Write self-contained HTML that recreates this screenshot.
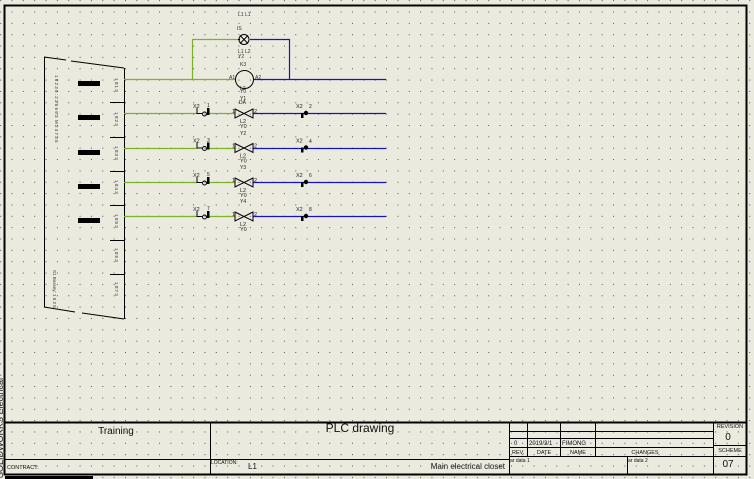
<!DOCTYPE html>
<html><head><meta charset="utf-8"><style>
html,body{margin:0;padding:0;background:#ebeadf;width:754px;height:479px;overflow:hidden}
svg{display:block}
text{font-family:"Liberation Sans",sans-serif}
</style></head><body>
<svg width="754" height="479" viewBox="0 0 754 479" xmlns="http://www.w3.org/2000/svg">
<defs>
<pattern id="d" x="11.5" y="11.5" width="11.35" height="11.35" patternUnits="userSpaceOnUse">
<rect x="0" y="0" width="1" height="1" fill="#555"/>
</pattern>
</defs>
<rect width="754" height="479" fill="#ebeadf"/>
<rect width="754" height="479" fill="url(#d)"/>
<!-- frame -->
<rect x="4.5" y="5.5" width="742" height="469" fill="none" stroke="#000" stroke-width="2"/>
<rect x="5" y="476" width="88" height="3" fill="#000"/>
<text transform="translate(3,478) rotate(-90)" font-size="9" fill="#222">SOLIDWORKS Electrical</text>

<!-- title block -->
<g stroke="#000" fill="none" stroke-width="1">
<line x1="4" y1="422.5" x2="747" y2="422.5" stroke-width="2"/>
<line x1="210.5" y1="422" x2="210.5" y2="474"/>
<line x1="509.5" y1="422" x2="509.5" y2="474"/>
<line x1="4" y1="459.5" x2="509" y2="459.5"/>
<line x1="713.5" y1="422" x2="713.5" y2="474"/>
<line x1="509" y1="431.5" x2="713" y2="431.5"/>
<line x1="509" y1="438.5" x2="713" y2="438.5"/>
<line x1="509" y1="447.5" x2="713" y2="447.5"/>
<line x1="509" y1="456.5" x2="747" y2="456.5"/>
<line x1="713" y1="445.5" x2="747" y2="445.5"/>
<line x1="527.5" y1="422" x2="527.5" y2="456"/>
<line x1="560.5" y1="422" x2="560.5" y2="456"/>
<line x1="595.5" y1="422" x2="595.5" y2="456"/>
<line x1="627.5" y1="456" x2="627.5" y2="474"/>
</g>
<g fill="#111">
<text x="116" y="434" font-size="10" text-anchor="middle">Training</text>
<text x="360" y="432" font-size="12" text-anchor="middle">PLC drawing</text>
<text x="7" y="469" font-size="5.5">CONTRACT:</text>
<text x="211" y="464" font-size="5">LOCATION:</text>
<text x="248" y="469" font-size="8">L1</text>
<text x="505" y="469" font-size="8" text-anchor="end">Main electrical closet</text>
<text x="514" y="445" font-size="6">0</text>
<text x="529" y="445" font-size="6">2019/3/1</text>
<text x="562" y="445" font-size="6">FIMONG</text>
<text x="512" y="454" font-size="5.5">REV.</text>
<text x="544" y="454" font-size="5.5" text-anchor="middle">DATE</text>
<text x="578" y="454" font-size="5.5" text-anchor="middle">NAME</text>
<text x="645" y="454" font-size="5.5" text-anchor="middle">CHANGES</text>
<text x="510" y="462" font-size="5">ar data 1</text>
<text x="628" y="462" font-size="5">ar data 2</text>
<text x="730" y="428" font-size="5.5" text-anchor="middle">REVISION</text>
<text x="728" y="440" font-size="10" text-anchor="middle">0</text>
<text x="730" y="452" font-size="5.5" text-anchor="middle">SCHEME</text>
<text x="728" y="467" font-size="10" text-anchor="middle">07</text>
</g>

<!-- connector -->
<g stroke="#000" fill="none" stroke-width="1">
<polyline points="44.5,57 44.5,307"/>
<polyline points="124.5,68 124.5,319"/>
<line x1="44" y1="57" x2="66" y2="60"/>
<line x1="71" y1="61" x2="124" y2="68" />
<line x1="44" y1="307" x2="75" y2="312"/>
<line x1="82" y1="313" x2="124" y2="319"/>
<line x1="110" y1="102.5" x2="124" y2="102.5"/>
<line x1="110" y1="137.5" x2="124" y2="137.5"/>
<line x1="110" y1="171.5" x2="124" y2="171.5"/>
<line x1="110" y1="205.5" x2="124" y2="205.5"/>
<line x1="110" y1="240.5" x2="124" y2="240.5"/>
<line x1="110" y1="274.5" x2="124" y2="274.5"/>
</g>
<g fill="#000">
<rect x="78" y="81" width="22" height="5"/>
<rect x="78" y="115" width="22" height="5"/>
<rect x="78" y="150" width="22" height="5"/>
<rect x="78" y="184" width="22" height="5"/>
<rect x="78" y="218" width="22" height="5"/>
</g>
<g font-size="4.5" fill="#333">
<text transform="translate(55,75) rotate(90)">1 8 2 3 5 : 2 3 5 6 6 3 &#160;M 2 4 7 3 5</text>
<text transform="translate(53,270) rotate(90)">S1 Bossey: 1 5 2 5</text>
<text transform="translate(115,78) rotate(90)">1 0:1 3</text>
<text transform="translate(115,112) rotate(90)">1 0:2 3</text>
<text transform="translate(115,146) rotate(90)">1 0:3 3</text>
<text transform="translate(115,180) rotate(90)">1 0:4 3</text>
<text transform="translate(115,214) rotate(90)">1 0:5 3</text>
<text transform="translate(115,248) rotate(90)">1 0:6 3</text>
<text transform="translate(115,282) rotate(90)">1 0:7 3</text>
</g>

<!-- wires -->
<g stroke="#7cb22a" stroke-width="1.2" fill="none">
<polyline points="124,79.5 235,79.5"/>
<polyline points="192.5,79 192.5,39.5 238,39.5"/>
<line x1="124" y1="113.5" x2="197" y2="113.5"/>
<line x1="124" y1="148.5" x2="197" y2="148.5"/>
<line x1="124" y1="182.5" x2="197" y2="182.5"/>
<line x1="124" y1="216.5" x2="197" y2="216.5"/>
<line x1="209" y1="113.5" x2="235" y2="113.5"/>
<line x1="209" y1="148.5" x2="235" y2="148.5"/>
<line x1="209" y1="182.5" x2="235" y2="182.5"/>
<line x1="209" y1="216.5" x2="235" y2="216.5"/>
</g>
<g stroke="#1515c0" stroke-width="1.2" fill="none">
<polyline points="250,39.5 289.5,39.5 289.5,79"/>
<line x1="253" y1="79.5" x2="386" y2="79.5"/>
<line x1="253" y1="113.5" x2="386" y2="113.5"/>
<line x1="253" y1="148.5" x2="386" y2="148.5"/>
<line x1="253" y1="182.5" x2="386" y2="182.5"/>
<line x1="253" y1="216.5" x2="386" y2="216.5"/>
</g>
<!-- lamp -->
<g stroke="#000" fill="none" stroke-width="1">
<circle cx="244" cy="39.5" r="5"/>
<line x1="240" y1="35.5" x2="248" y2="43.5"/>
<line x1="248" y1="35.5" x2="240" y2="43.5"/>
<line x1="238" y1="39.5" x2="240" y2="39.5"/>
<circle cx="244.5" cy="79.5" r="9"/>
</g>
<g font-size="5" fill="#333">
<text x="238" y="16">L1 L1</text>
<text x="237" y="30">IS</text>
<text x="238" y="53">L1 L2</text>
<text x="238" y="58">Y2</text>
<text x="240" y="66">K3</text>
<text x="229" y="79">A1</text>
<text x="255" y="79">A2</text>
<text x="240" y="90">L2</text>
<text x="240" y="93">Y0</text>
</g>
<!-- rows -->
<g id="row">
<g stroke="#000" fill="none" stroke-width="1">
<polyline points="197,108 197,113.5 202,113.5"/>
<circle cx="204.5" cy="114" r="2"/>
<polygon points="235,109 244,113.5 235,118"/>
<polygon points="253,109 244,113.5 253,118"/>
</g>
<rect x="207" y="108" width="2.5" height="7" fill="#000"/>
<rect x="301" y="113" width="2.5" height="5" fill="#000"/>
<circle cx="306" cy="113" r="2.2" fill="#000"/>
<g font-size="5.5" fill="#222">
<text x="193" y="108">X2</text>
<text x="296" y="108">X2</text>
<text x="232" y="113">1</text>
<text x="254" y="113">2</text>
<text x="240" y="123">L2</text>
<text x="240" y="128">Y0</text>
</g>
</g>
<use href="#row" y="34.5"/>
<use href="#row" y="69"/>
<use href="#row" y="103"/>
<g font-size="5" fill="#222">
<text x="207" y="107">1</text><text x="309" y="108">2</text>
<text x="207" y="142">3</text><text x="309" y="143">4</text>
<text x="207" y="176">5</text><text x="309" y="177">6</text>
<text x="207" y="210">7</text><text x="309" y="211">8</text>
<text x="240" y="100">Y1</text><text x="239" y="104">DA</text>
<text x="240" y="135">Y2</text>
<text x="240" y="169">Y3</text>
<text x="240" y="203">Y4</text>
</g>
</svg>
</body></html>
